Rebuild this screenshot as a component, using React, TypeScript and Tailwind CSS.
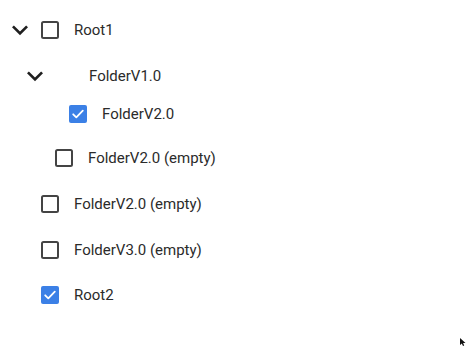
import React from "react";

type Row = {
  label: string;
  pl: string;
  chevron?: boolean;
  box?: "empty" | "checked" | "hidden";
  mt: string;
};

// tree rows as they appear in the screenshot
const rows: Row[] = [
  { label: "Root1", pl: "pl-[4px]", chevron: true, box: "empty", mt: "mt-[7px]" },
  { label: "FolderV1.0", pl: "pl-[19px]", chevron: true, box: "hidden", mt: "mt-0" },
  { label: "FolderV2.0", pl: "pl-[69px]", box: "checked", mt: "-mt-[8px]" },
  { label: "FolderV2.0 (empty)", pl: "pl-[55px]", box: "empty", mt: "-mt-[2px]" },
  { label: "FolderV2.0 (empty)", pl: "pl-[41px]", box: "empty", mt: "mt-0" },
  { label: "FolderV3.0 (empty)", pl: "pl-[41px]", box: "empty", mt: "mt-0" },
  { label: "Root2", pl: "pl-[41px]", box: "checked", mt: "-mt-[1px]" },
];

function Chevron() {
  return (
    <svg width="32" height="32" viewBox="0 0 24 24" className="fill-[#1f1f1f] shrink-0">
      <path d="M16.59 8.59L12 13.17 7.41 8.59 6 10l6 6 6-6z" />
    </svg>
  );
}

function Box({ kind }: { kind: "empty" | "checked" | "hidden" }) {
  if (kind === "hidden") {
    return <div className="w-[18px] h-[18px] shrink-0" />;
  }
  if (kind === "checked") {
    return (
      <svg width="18" height="18" viewBox="0 0 18 18" className="shrink-0">
        <rect x="0" y="0" width="18" height="18" rx="2" fill="#3b80e6" />
        <path
          d="M4.2 9.3l3.1 3 6.5-6.6"
          fill="none"
          stroke="#fff"
          strokeWidth="1.8"
          strokeLinecap="round"
          strokeLinejoin="round"
        />
      </svg>
    );
  }
  return (
    <svg width="18" height="18" viewBox="0 0 18 18" className="shrink-0">
      <rect x="1" y="1" width="16" height="16" rx="1.5" fill="none" stroke="#444" strokeWidth="2" />
    </svg>
  );
}

export default function App() {
  return (
    <div className="relative w-[474px] h-[349px] bg-white overflow-hidden font-['Roboto',sans-serif] text-[15px] text-[#2b2b2b]">
      <div className="flex flex-col">
        {rows.map((row, i) => (
          <div key={i} className={`flex items-center h-[46px] ${row.pl} ${row.mt}`}>
            {row.chevron && (
              <div className="mr-[5px] flex">
                <Chevron />
              </div>
            )}
            {row.box && <Box kind={row.box} />}
            <span className="ml-[15px] leading-none whitespace-nowrap">{row.label}</span>
          </div>
        ))}
      </div>

      {/* mouse pointer left in the capture */}
      <svg
        width="6"
        height="8"
        viewBox="0 0 6 8"
        className="absolute left-[460px] top-[338px]"
      >
        <path d="M0 0v7l1.8-1.6L3 8l1.2-.5-1.1-2.5H5.5z" fill="#111" />
      </svg>
    </div>
  );
}
